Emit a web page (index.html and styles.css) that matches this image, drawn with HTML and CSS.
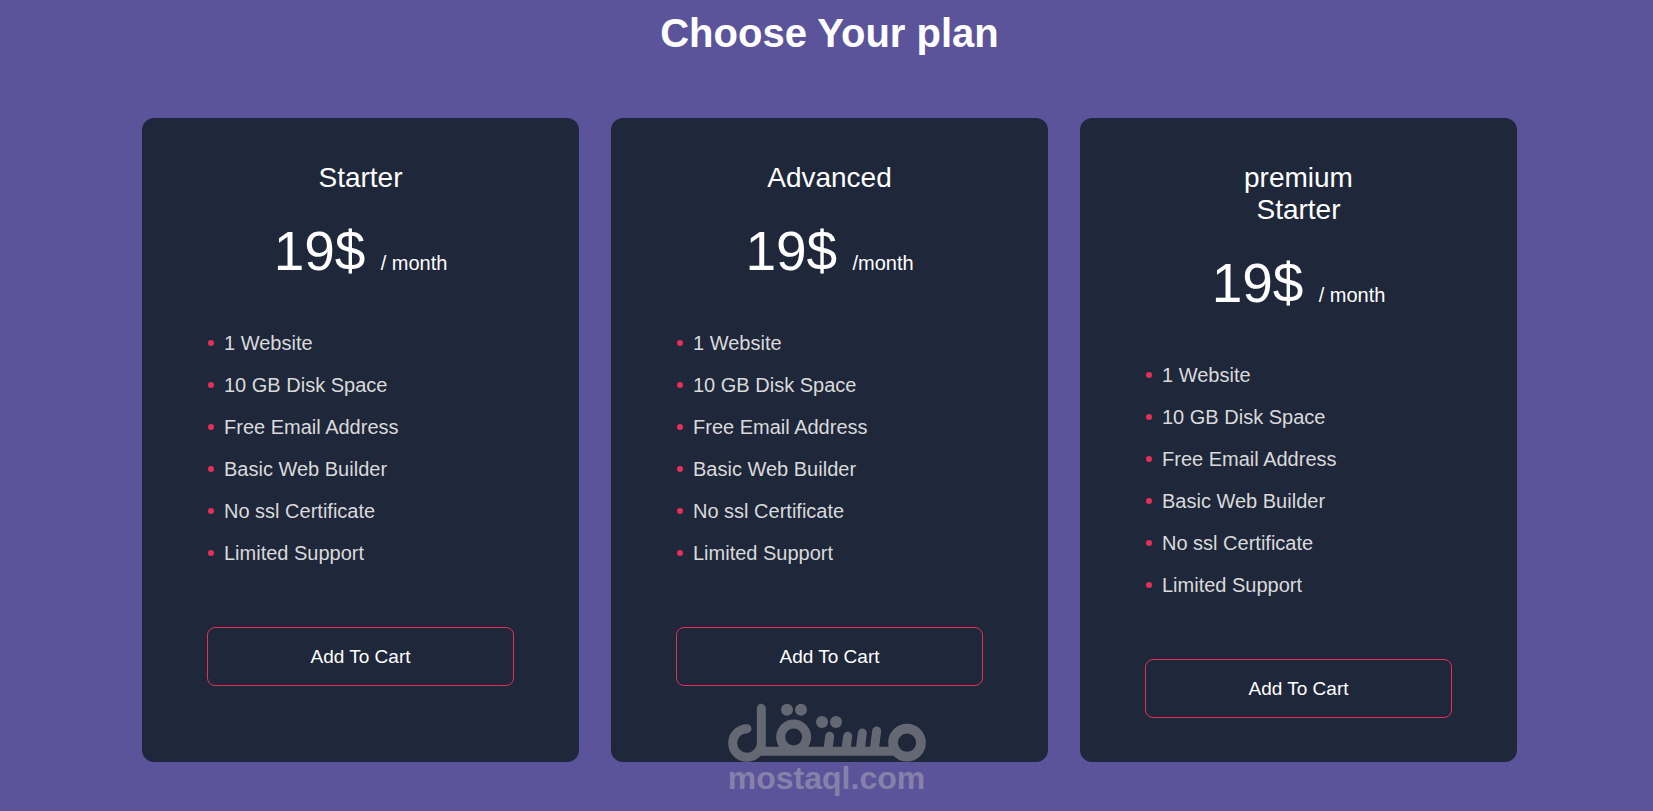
FILE: index.html
```html
<!DOCTYPE html>
<html lang="en">
<head>
    <meta charset="UTF-8">
    <meta name="viewport" content="width=device-width, initial-scale=1.0">
    <title>Choose Your plan</title>
    <link rel="stylesheet" href="styles.css">
</head>
<body>
    <section class="pricing">
        <h1 class="heading">Choose Your plan</h1>
        <div class="plans">
            <div class="card">
                <h2>Starter</h2>
                <p class="price">19$ <span>/ month</span></p>
                <ul>
                    <li>1 Website</li>
                    <li>10 GB Disk Space</li>
                    <li>Free Email Address</li>
                    <li>Basic Web Builder</li>
                    <li>No ssl Certificate</li>
                    <li>Limited Support</li>
                </ul>
                <button type="button" class="btn">Add To Cart</button>
            </div>
            <div class="card">
                <h2>Advanced</h2>
                <p class="price">19$ <span>/month</span></p>
                <ul>
                    <li>1 Website</li>
                    <li>10 GB Disk Space</li>
                    <li>Free Email Address</li>
                    <li>Basic Web Builder</li>
                    <li>No ssl Certificate</li>
                    <li>Limited Support</li>
                </ul>
                <button type="button" class="btn">Add To Cart</button>
            </div>
            <div class="card">
                <h2>premium<br>Starter</h2>
                <p class="price">19$ <span>/ month</span></p>
                <ul>
                    <li>1 Website</li>
                    <li>10 GB Disk Space</li>
                    <li>Free Email Address</li>
                    <li>Basic Web Builder</li>
                    <li>No ssl Certificate</li>
                    <li>Limited Support</li>
                </ul>
                <button type="button" class="btn">Add To Cart</button>
            </div>
        </div>
    </section>

    <!-- watermark over the cards -->
    <div class="watermark">
        <svg class="logo" viewBox="78 70 600 177" fill="none" stroke="#bbb" stroke-width="27" stroke-linecap="round" aria-hidden="true">
            <path d="M138 147A43 43 0 1 0 181 189V86"/>
            <path d="M172 215H578"/>
            <circle cx="278" cy="172" r="39"/>
            <circle cx="618" cy="189" r="42" stroke-width="29"/>
            <path d="M386 170L381 208M440 170L435 208M484 160L478 208M527 154L520 208"/>
            <g fill="#bbb" stroke="none">
                <circle cx="258" cy="90" r="18"/>
                <circle cx="300" cy="90" r="18"/>
                <circle cx="363" cy="127" r="18"/>
                <circle cx="405" cy="127" r="18"/>
            </g>
        </svg>
        <span>mostaql.com</span>
    </div>
</body>
</html>
```
FILE: styles.css
```css
*{
    margin: 0;
    padding: 0;
    box-sizing: border-box;
}
body{
    background-color: #5c549b;
    color: #fff;
    font-family: Arial, "Liberation Sans", sans-serif;
    position: relative;
    min-height: 100vh;
}
.pricing{
    padding: 10px 136px 48px 142px;
}
.heading{
    font-size: 40px;
    line-height: 46px;
    text-align: center;
    margin-bottom: 62px;
}
.plans{
    display: grid;
    grid-template-columns: repeat(3, 1fr);
    gap: 32px;
}
.card{
    background-color: #1f273a;
    border-radius: 12px;
    padding: 44px 65px;
}
.card h2{
    font-size: 28px;
    font-weight: normal;
    line-height: 32px;
    text-align: center;
    margin-bottom: 24px;
}
.price{
    font-size: 55px;
    line-height: 66px;
    text-align: center;
    margin-bottom: 26px;
}
.price span{
    font-size: 20px;
}
.card ul{
    list-style: none;
    margin-bottom: 53px;
}
.card li{
    display: flex;
    align-items: center;
    gap: 10px;
    padding-left: 1px;
    font-size: 20px;
    line-height: 42px;
    color: #dadada;
}
.card li::before{
    content: "";
    width: 6px;
    height: 6px;
    border-radius: 50%;
    background-color: #e62e56;
}
.btn{
    display: block;
    width: 100%;
    padding: 18px;
    border: 1px solid #e62e56;
    border-radius: 8px;
    background: none;
    color: #fff;
    font-family: inherit;
    font-size: 19px;
    line-height: 21px;
    cursor: pointer;
}
.watermark{
    position: absolute;
    left: 0;
    right: 0;
    top: 703px;
    display: flex;
    flex-direction: column;
    align-items: center;
    color: #bbb;
    opacity: 0.44;
    pointer-events: none;
}
.logo{
    width: 200px;
    height: 59px;
}
.watermark span{
    font-size: 32px;
    font-weight: bold;
    line-height: 32px;
}
```
